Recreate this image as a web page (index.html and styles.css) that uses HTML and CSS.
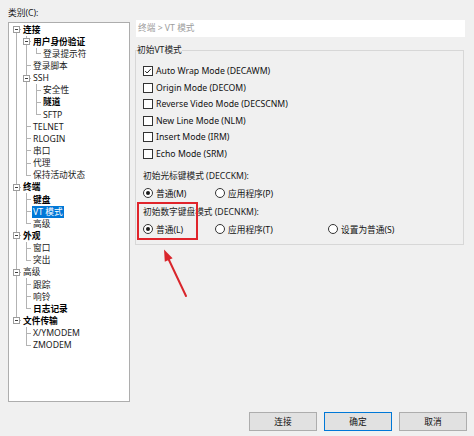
FILE: index.html
```html
<!DOCTYPE html>
<html lang="zh-CN">
<head>
<meta charset="utf-8">
<title>会话选项 - VT 模式</title>
<link rel="stylesheet" href="styles.css">
</head>
<body>
<div class="dialog">
  <div class="main">
    <div class="left">
      <div class="cat-label">类别(C):</div>
      <div class="tree">
        <div class="row"><span class="c f"><span class="exp"></span></span><span class="lbl b">连接</span></div>
        <div class="row"><span class="c v"></span><span class="c t"><span class="exp"></span></span><span class="lbl b">用户身份验证</span></div>
        <div class="row"><span class="c v"></span><span class="c v"></span><span class="c l"></span><span class="lbl">登录提示符</span></div>
        <div class="row"><span class="c v"></span><span class="c t"></span><span class="lbl">登录脚本</span></div>
        <div class="row"><span class="c v"></span><span class="c t"><span class="exp"></span></span><span class="lbl">SSH</span></div>
        <div class="row"><span class="c v"></span><span class="c v"></span><span class="c t"></span><span class="lbl">安全性</span></div>
        <div class="row"><span class="c v"></span><span class="c v"></span><span class="c t"></span><span class="lbl b">隧道</span></div>
        <div class="row"><span class="c v"></span><span class="c v"></span><span class="c l"></span><span class="lbl">SFTP</span></div>
        <div class="row"><span class="c v"></span><span class="c t"></span><span class="lbl">TELNET</span></div>
        <div class="row"><span class="c v"></span><span class="c t"></span><span class="lbl">RLOGIN</span></div>
        <div class="row"><span class="c v"></span><span class="c t"></span><span class="lbl">串口</span></div>
        <div class="row"><span class="c v"></span><span class="c t"></span><span class="lbl">代理</span></div>
        <div class="row"><span class="c v"></span><span class="c l"></span><span class="lbl">保持活动状态</span></div>
        <div class="row"><span class="c t"><span class="exp"></span></span><span class="lbl b">终端</span></div>
        <div class="row"><span class="c v"></span><span class="c t"></span><span class="lbl b">键盘</span></div>
        <div class="row"><span class="c v"></span><span class="c t"></span><span class="lbl sel">VT 模式</span></div>
        <div class="row"><span class="c v"></span><span class="c l"></span><span class="lbl">高级</span></div>
        <div class="row"><span class="c t"><span class="exp"></span></span><span class="lbl b">外观</span></div>
        <div class="row"><span class="c v"></span><span class="c t"></span><span class="lbl">窗口</span></div>
        <div class="row"><span class="c v"></span><span class="c l"></span><span class="lbl">突出</span></div>
        <div class="row"><span class="c t"><span class="exp"></span></span><span class="lbl">高级</span></div>
        <div class="row"><span class="c v"></span><span class="c t"></span><span class="lbl">跟踪</span></div>
        <div class="row"><span class="c v"></span><span class="c t"></span><span class="lbl">响铃</span></div>
        <div class="row"><span class="c v"></span><span class="c l"></span><span class="lbl b">日志记录</span></div>
        <div class="row"><span class="c l"><span class="exp"></span></span><span class="lbl b">文件传输</span></div>
        <div class="row"><span class="c"></span><span class="c t"></span><span class="lbl">X/YMODEM</span></div>
        <div class="row"><span class="c"></span><span class="c l"></span><span class="lbl">ZMODEM</span></div>
      </div>
    </div>
    <div class="right">
      <div class="crumb">终端 &gt; VT 模式</div>
      <fieldset class="group">
        <legend>初始VT模式</legend>
        <div class="opt"><span class="cb"><svg viewBox="0 0 8 8" width="8" height="8"><path d="M1.2 4.1 L3.1 6 L6.9 1.9" fill="none" stroke="#222" stroke-width="1"/></svg></span>Auto Wrap Mode (DECAWM)</div>
        <div class="opt"><span class="cb"></span>Origin Mode (DECOM)</div>
        <div class="opt"><span class="cb"></span>Reverse Video Mode (DECSCNM)</div>
        <div class="opt"><span class="cb"></span>New Line Mode (NLM)</div>
        <div class="opt"><span class="cb"></span>Insert Mode (IRM)</div>
        <div class="opt"><span class="cb"></span>Echo Mode (SRM)</div>
        <div class="sublabel">初始光标键模式 (DECCKM):</div>
        <div class="radios">
          <div class="opt"><span class="rb on"></span>普通(M)</div>
          <div class="opt"><span class="rb"></span>应用程序(P)</div>
        </div>
        <div class="sublabel second">初始数字键盘模式 (DECNKM):</div>
        <div class="radios">
          <div class="opt"><span class="rb on"></span>普通(L)</div>
          <div class="opt"><span class="rb"></span>应用程序(T)</div>
          <div class="opt"><span class="rb"></span>设置为普通(S)</div>
        </div>
      </fieldset>
    </div>
  </div>
  <div class="footer">
    <button class="btn">连接</button>
    <button class="btn default">确定</button>
    <button class="btn">取消</button>
  </div>
  <div class="mark"></div>
  <svg class="arrow" viewBox="150 240 45 65" width="45" height="65">
    <line x1="186" y1="296" x2="168.5" y2="259" stroke="#d9262c" stroke-width="2" stroke-linecap="round"/>
    <polygon points="164,249.5 172.6,258.2 164.8,261.8" fill="#d9262c"/>
  </svg>
</div>
</body>
</html>
```

FILE: styles.css
```css
html, body {
  margin: 0;
  padding: 0;
}

body {
  width: 474px;
  height: 436px;
  overflow: hidden;
  background: #f0f0f0;
  font-family: "Noto Sans", "Noto Sans CJK SC", sans-serif;
  font-size: 8.7px;
  color: #000;
}

.dialog {
  position: relative;
  width: 474px;
  height: 436px;
}

.main {
  display: flex;
  align-items: flex-start;
  gap: 6px;
  padding: 6px 0 0 8px;
}

.left {
  width: 122px;
  display: flex;
  flex-direction: column;
}

.cat-label {
  height: 14px;
  line-height: 14px;
  margin-bottom: 2px;
  color: #1a1a1a;
}

.tree {
  height: 380px;
  box-sizing: border-box;
  border: 1px solid #adadad;
  background: #fff;
  padding: 0.5px 0 0 2px;
}

.row {
  display: flex;
  align-items: center;
  height: 12.15px;
  white-space: nowrap;
}

.c {
  flex: none;
  width: 10px;
  align-self: stretch;
  display: flex;
  align-items: center;
  justify-content: flex-start;
}

.v {
  background: linear-gradient(#b3b3b3, #b3b3b3) 5px 0 / 1px 100% no-repeat;
}

.t {
  background:
    linear-gradient(#b3b3b3, #b3b3b3) 5px 0 / 1px 100% no-repeat,
    linear-gradient(#b3b3b3, #b3b3b3) 5px 50% / 5px 1px no-repeat;
}

.l {
  background:
    linear-gradient(#b3b3b3, #b3b3b3) 5px 0 / 1px 50% no-repeat,
    linear-gradient(#b3b3b3, #b3b3b3) 5px 50% / 5px 1px no-repeat;
}

.f {
  background:
    linear-gradient(#b3b3b3, #b3b3b3) 5px 100% / 1px 50% no-repeat,
    linear-gradient(#b3b3b3, #b3b3b3) 5px 50% / 5px 1px no-repeat;
}

.exp {
  width: 7px;
  height: 7px;
  margin-left: 2px;
  box-sizing: border-box;
  border: 1px solid #9c9c9c;
  background: #fff;
  display: flex;
  align-items: center;
  justify-content: center;
}

.exp::before {
  content: "";
  width: 3px;
  height: 1px;
  background: #404040;
}

.lbl {
  margin-left: 2px;
  line-height: 12px;
  color: #1a1a1a;
}

.b {
  font-weight: 700;
  color: #000;
}

.sel {
  margin-left: 1px;
  padding: 0 1px;
  background: #0078d7;
  color: #fff;
}

.right {
  width: 329px;
  padding-top: 14px;
  display: flex;
  flex-direction: column;
}

.crumb {
  height: 17px;
  line-height: 17px;
  padding-left: 2px;
  background: #fff;
  color: #9d9d9d;
}

.group {
  margin: 7px 1px 0 -1px;
  padding: 6.75px 7px 7px 7px;
  border: 1px solid #d7d7d7;
  min-inline-size: 0;
}

.group legend {
  padding: 0;
  margin-left: -6px;
  line-height: 12px;
  color: #1a1a1a;
}

.opt {
  display: flex;
  align-items: center;
  height: 16.5px;
  white-space: nowrap;
  color: #111;
}

.cb {
  flex: none;
  width: 10px;
  height: 10px;
  box-sizing: border-box;
  border: 1px solid #333;
  background: #fff;
  margin-right: 3px;
  display: flex;
  align-items: center;
  justify-content: center;
}

.rb {
  flex: none;
  width: 10px;
  height: 10px;
  box-sizing: border-box;
  border: 1px solid #333;
  border-radius: 50%;
  background: #fff;
  margin-right: 3px;
  display: flex;
  align-items: center;
  justify-content: center;
}

.rb.on::before {
  content: "";
  width: 4px;
  height: 4px;
  border-radius: 50%;
  background: #1a1a1a;
}

.sublabel {
  line-height: 12px;
  margin-top: 8.25px;
  margin-bottom: 2.75px;
  color: #1a1a1a;
}

.sublabel.second {
  margin-top: 4.75px;
}

.radios {
  display: grid;
  grid-template-columns: 72px 113px auto;
}

.footer {
  display: flex;
  justify-content: flex-end;
  gap: 7px;
  padding-right: 7px;
  margin-top: 10px;
}

.btn {
  width: 68px;
  height: 19px;
  box-sizing: border-box;
  padding: 0;
  border: 1px solid #adadad;
  background: #e1e1e1;
  font: inherit;
  color: #111;
}

.btn.default {
  border-color: #0078d7;
}

.mark {
  position: absolute;
  left: 137px;
  top: 202px;
  width: 61px;
  height: 38px;
  box-sizing: border-box;
  border: 2px solid #e0242b;
}

.arrow {
  position: absolute;
  left: 150px;
  top: 240px;
}
```
